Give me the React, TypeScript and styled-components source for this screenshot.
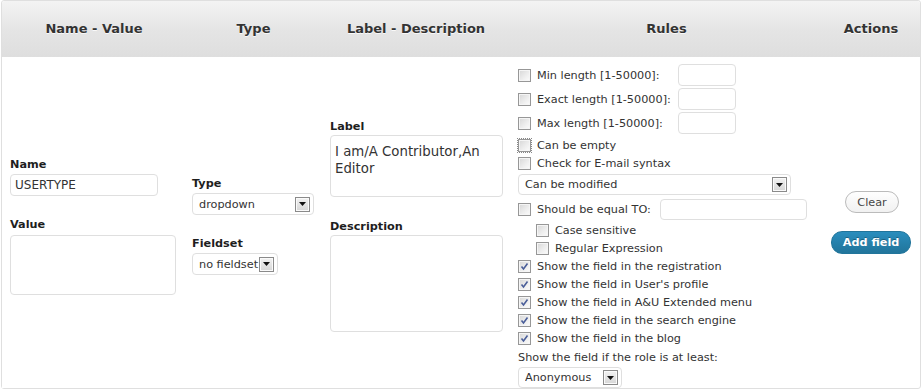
import React from 'react';
import styled, { createGlobalStyle } from 'styled-components';

const GlobalStyle = createGlobalStyle`
  html, body { margin: 0; padding: 0; background: #fff; }
  body { font-family: "DejaVu Sans", Verdana, sans-serif; }
`;

const Page = styled.div`
  padding-left: 1px;
`;

const Table = styled.table`
  width: 920px;
  table-layout: fixed;
  border-collapse: separate;
  border-spacing: 0;
  border: 1px solid #dfdfdf;
  border-radius: 3px;
  font-family: "DejaVu Sans", Verdana, sans-serif;
`;

const HeadCell = styled.th`
  height: 56px;
  padding: 0 0 2px 0;
  box-sizing: border-box;
  vertical-align: middle;
  text-align: center;
  font-size: 13px;
  font-weight: bold;
  color: #333;
  text-shadow: 0 1px 0 rgba(255, 255, 255, 0.8);
  background: linear-gradient(to bottom, #f3f3f3 0%, #e5e5e5 50%, #dedede 100%);
  &:first-child { border-top-left-radius: 3px; }
  &:last-child { border-top-right-radius: 3px; }
`;

const Cell = styled.td<{ $pl?: number }>`
  padding: 7px 0 0 ${(p) => p.$pl ?? 0}px;
  vertical-align: middle;
  background: #fff;
`;

const ActionCell = styled.td`
  padding: 7px 0 0 0;
  vertical-align: middle;
  text-align: center;
`;

const Stack = styled.div<{ $pb?: number }>`
  display: flex;
  flex-direction: column;
  align-items: flex-start;
  padding-bottom: ${(p) => p.$pb ?? 0}px;
`;

const FieldLabel = styled.div<{ $mt?: number; $mb?: number }>`
  font-size: 11.25px;
  line-height: 14px;
  font-weight: bold;
  color: #1e1e1e;
  margin-top: ${(p) => p.$mt ?? 0}px;
  margin-bottom: ${(p) => p.$mb ?? 0}px;
`;

const TextInput = styled.input<{ $w: number; $h: number; $fs?: number }>`
  box-sizing: border-box;
  width: ${(p) => p.$w}px;
  height: ${(p) => p.$h}px;
  margin: 0;
  padding: 0 4px;
  border: 1px solid #dfdfdf;
  border-radius: 4px;
  background: #fff;
  font-family: "DejaVu Sans", Verdana, sans-serif;
  font-size: ${(p) => p.$fs ?? 12}px;
  color: #333;
  outline: none;
`;

const TextArea = styled.textarea<{ $w: number; $h: number }>`
  box-sizing: border-box;
  display: block;
  width: ${(p) => p.$w}px;
  height: ${(p) => p.$h}px;
  margin: 0;
  padding: 7px 4px 4px;
  border: 1px solid #dfdfdf;
  border-radius: 4px;
  background: #fff;
  font-family: "DejaVu Sans", Verdana, sans-serif;
  font-size: 13.3px;
  line-height: 17px;
  color: #333;
  resize: none;
  overflow: hidden;
  outline: none;
`;

const SelectBox = styled.div<{ $w: number; $h: number; $mt?: number }>`
  box-sizing: border-box;
  display: flex;
  align-items: center;
  width: ${(p) => p.$w}px;
  height: ${(p) => p.$h}px;
  margin-top: ${(p) => p.$mt ?? 0}px;
  padding: 0 3px 0 6px;
  border: 1px solid #dfdfdf;
  border-radius: 4px;
  background: #fff;
  font-size: 11.25px;
  color: #333;
`;

const SelectText = styled.span`
  flex: 1;
  min-width: 0;
  white-space: nowrap;
  overflow: hidden;
`;

const ArrowBox = styled.span`
  flex: none;
  box-sizing: border-box;
  width: 15px;
  height: 15px;
  border: 1px solid #8a8a8a;
  background: linear-gradient(to bottom, #f2f2f2, #d6d6d6);
  box-shadow: inset 0 0 0 1px #fafafa;
  display: flex;
  align-items: center;
  justify-content: center;
`;

const Select = ({ w, h, mt, children }: { w: number; h: number; mt?: number; children: React.ReactNode }) => (
  <SelectBox $w={w} $h={h} $mt={mt}>
    <SelectText>{children}</SelectText>
    <ArrowBox>
      <svg width="7" height="4" viewBox="0 0 7 4">
        <path d="M0 0 H7 L3.5 4 Z" fill="#111" />
      </svg>
    </ArrowBox>
  </SelectBox>
);

const Box = styled.span<{ $focus?: boolean }>`
  flex: none;
  box-sizing: border-box;
  width: 13px;
  height: 13px;
  border: 1px solid #979797;
  background: linear-gradient(135deg, #d6d6d6 0%, #ededed 55%, #fcfcfc 100%);
  box-shadow: inset 0 0 0 1px #f5f5f5;
  outline: ${(p) => (p.$focus ? '1px dotted #888' : 'none')};
  outline-offset: 0px;
  display: inline-flex;
  align-items: center;
  justify-content: center;
`;

const Check = ({ checked, focus }: { checked?: boolean; focus?: boolean }) => (
  <Box $focus={focus}>
    {checked && (
      <svg width="11" height="11" viewBox="0 0 11 11">
        <path d="M2.5 5.5 L4.5 8 L8.5 2.5" fill="none" stroke="#4a5e99" strokeWidth="1.6" />
      </svg>
    )}
  </Box>
);

const LengthRow = styled.div`
  display: flex;
  align-items: center;
  height: 22px;
  margin-bottom: 2px;
`;

const CheckRow = styled.div<{ $indent?: number; $h?: number; $mt?: number }>`
  display: flex;
  align-items: center;
  height: ${(p) => p.$h ?? 18}px;
  margin-top: ${(p) => p.$mt ?? 0}px;
  padding-left: ${(p) => p.$indent ?? 0}px;
`;

const RuleText = styled.span<{ $w?: number }>`
  margin-left: 6px;
  font-size: 11.25px;
  color: #333;
  white-space: nowrap;
  ${(p) => (p.$w ? `width: ${p.$w}px;` : '')}
`;

const PlainText = styled.div`
  height: 18px;
  margin-top: 1px;
  display: flex;
  align-items: center;
  font-size: 11.25px;
  color: #333;
  white-space: nowrap;
`;

const Rules = styled.div`
  display: flex;
  flex-direction: column;
`;

const ClearButton = styled.button`
  box-sizing: border-box;
  height: 22px;
  margin: 0 0 18px 2px;
  padding: 0 11px;
  border: 1px solid #bbb;
  border-radius: 11px;
  background: linear-gradient(to bottom, #fefefe, #f1f1f1);
  font-family: "DejaVu Sans", Verdana, sans-serif;
  font-size: 11.25px;
  color: #464646;
  cursor: pointer;
`;

const PrimaryButton = styled.button`
  box-sizing: border-box;
  height: 23px;
  margin: 0;
  padding: 0 11px;
  border: 1px solid #21759b;
  border-radius: 11px;
  background: linear-gradient(to bottom, #2a8dbd, #21759b);
  font-family: "DejaVu Sans", Verdana, sans-serif;
  font-size: 11.25px;
  font-weight: bold;
  color: #fff;
  text-shadow: 0 -1px 0 rgba(0, 0, 0, 0.3);
  cursor: pointer;
`;

const Actions = styled.div`
  display: flex;
  flex-direction: column;
  align-items: center;
  padding-bottom: 7px;
`;

const showRows = [
  'Show the field in the registration',
  "Show the field in User's profile",
  'Show the field in A&U Extended menu',
  'Show the field in the search engine',
  'Show the field in the blog',
];

export default function App() {
  return (
    <Page>
      <GlobalStyle />
      <Table>
        <colgroup>
          <col style={{ width: 184 }} />
          <col style={{ width: 135 }} />
          <col style={{ width: 190 }} />
          <col style={{ width: 311 }} />
          <col style={{ width: 98 }} />
        </colgroup>
        <thead>
          <tr>
            <HeadCell>Name - Value</HeadCell>
            <HeadCell>Type</HeadCell>
            <HeadCell>Label - Description</HeadCell>
            <HeadCell>Rules</HeadCell>
            <HeadCell>Actions</HeadCell>
          </tr>
        </thead>
        <tbody>
          <tr>
            <Cell $pl={8}>
              <Stack>
                <FieldLabel $mb={2}>Name</FieldLabel>
                <TextInput $w={148} $h={22} defaultValue="USERTYPE" readOnly />
                <FieldLabel $mt={22} $mb={3}>Value</FieldLabel>
                <TextArea $w={166} $h={60} readOnly />
              </Stack>
            </Cell>
            <Cell $pl={6}>
              <Stack>
                <FieldLabel $mb={2}>Type</FieldLabel>
                <Select w={122} h={22}>dropdown</Select>
                <FieldLabel $mt={22} $mb={2}>Fieldset</FieldLabel>
                <Select w={86} h={22}>no fieldset</Select>
              </Stack>
            </Cell>
            <Cell $pl={9}>
              <Stack>
                <FieldLabel $mb={1}>Label</FieldLabel>
                <TextArea $w={173} $h={62} defaultValue="I am/A Contributor,An Editor" readOnly />
                <FieldLabel $mt={23} $mb={1}>Description</FieldLabel>
                <TextArea $w={173} $h={97} readOnly />
              </Stack>
            </Cell>
            <Cell $pl={7}>
              <Rules>
                <LengthRow>
                  <Check />
                  <RuleText $w={141}>Min length [1-50000]:</RuleText>
                  <TextInput $w={58} $h={22} readOnly />
                </LengthRow>
                <LengthRow>
                  <Check />
                  <RuleText $w={141}>Exact length [1-50000]:</RuleText>
                  <TextInput $w={58} $h={22} readOnly />
                </LengthRow>
                <LengthRow>
                  <Check />
                  <RuleText $w={141}>Max length [1-50000]:</RuleText>
                  <TextInput $w={58} $h={22} readOnly />
                </LengthRow>
                <CheckRow>
                  <Check focus />
                  <RuleText>Can be empty</RuleText>
                </CheckRow>
                <CheckRow>
                  <Check />
                  <RuleText>Check for E-mail syntax</RuleText>
                </CheckRow>
                <Select w={273} h={21} mt={2}>Can be modified</Select>
                <CheckRow $h={24} $mt={2}>
                  <Check />
                  <RuleText $w={123}>Should be equal TO:</RuleText>
                  <TextInput $w={147} $h={21} readOnly />
                </CheckRow>
                <CheckRow $indent={18}>
                  <Check />
                  <RuleText>Case sensitive</RuleText>
                </CheckRow>
                <CheckRow $indent={18}>
                  <Check />
                  <RuleText>Regular Expression</RuleText>
                </CheckRow>
                {showRows.map((t) => (
                  <CheckRow key={t}>
                    <Check checked />
                    <RuleText>{t}</RuleText>
                  </CheckRow>
                ))}
                <PlainText>Show the field if the role is at least:</PlainText>
                <Select w={104} h={21} mt={1}>Anonymous</Select>
              </Rules>
            </Cell>
            <ActionCell>
              <Actions>
                <ClearButton>Clear</ClearButton>
                <PrimaryButton>Add field</PrimaryButton>
              </Actions>
            </ActionCell>
          </tr>
        </tbody>
      </Table>
    </Page>
  );
}
